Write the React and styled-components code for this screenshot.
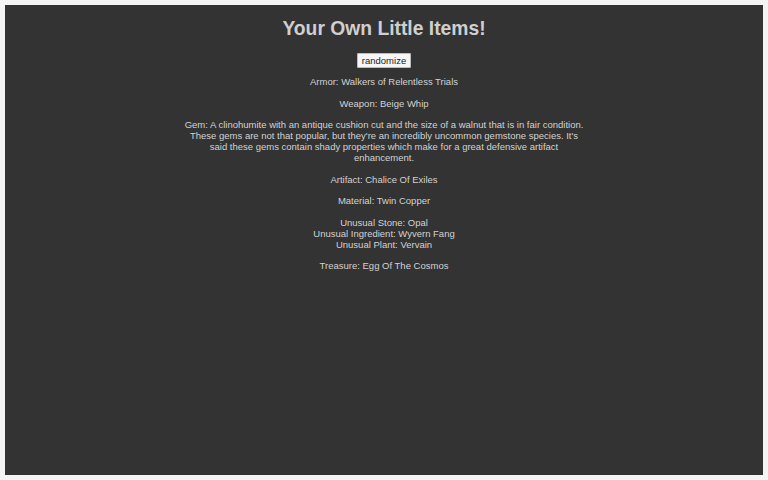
import React, { useState } from 'react';
import styled, { createGlobalStyle } from 'styled-components';

const GlobalStyle = createGlobalStyle`
    html, body {
        margin: 0;
        background: #f4f4f4;
    }
    body {
        padding: 5px;
        font-family: "Liberation Sans", Arial, sans-serif;
    }
`;

const items = {
    armor: 'Walkers of Relentless Trials',
    weapon: 'Beige Whip',
    gem: "A clinohumite with an antique cushion cut and the size of a walnut that is in fair condition. These gems are not that popular, but they're an incredibly uncommon gemstone species. It's said these gems contain shady properties which make for a great defensive artifact enhancement.",
    artifact: 'Chalice Of Exiles',
    material: 'Twin Copper',
    stone: 'Opal',
    ingredient: 'Wyvern Fang',
    plant: 'Vervain',
    treasure: 'Egg Of The Cosmos',
};

const App = () => {
    const [item] = useState(items);
    return (
        <>
            <GlobalStyle />
            <StyledPage>
                <StyledTitle>Your Own Little Items!</StyledTitle>
                <StyledButton>randomize</StyledButton>
                <StyledList>
                    <StyledLine>Armor: {item.armor}</StyledLine>
                    <StyledLine>Weapon: {item.weapon}</StyledLine>
                    <StyledLine>Gem: {item.gem}</StyledLine>
                    <StyledLine>Artifact: {item.artifact}</StyledLine>
                    <StyledLine>Material: {item.material}</StyledLine>
                    <StyledLine>
                        Unusual Stone: {item.stone}<br />
                        Unusual Ingredient: {item.ingredient}<br />
                        Unusual Plant: {item.plant}
                    </StyledLine>
                    <StyledLine>Treasure: {item.treasure}</StyledLine>
                </StyledList>
            </StyledPage>
        </>
    );
};

const StyledPage = styled.div`
    height: 470px;
    width: 758px;
    background: #333333;
    color: #d2d2d2;
    display: flex;
    flex-direction: column;
    align-items: center;
    text-align: center;
    overflow: hidden;
`;

const StyledTitle = styled.h1`
    font-size: 19.3px;
    line-height: 23px;
    font-weight: bold;
    color: #cfcfcf;
    margin: 12px 0 13px;
`;

const StyledButton = styled.button`
    font-family: "Liberation Sans", Arial, sans-serif;
    font-size: 9.5px;
    line-height: 11px;
    padding: 1px 4px;
    background: #f6f6f6;
    color: #222;
    border: 1px solid #bbb;
    border-radius: 1px;
`;

const StyledList = styled.div`
    width: 404px;
    margin-top: 8px;
`;

const StyledLine = styled.p`
    font-size: 9.5px;
    line-height: 11px;
    margin: 0 0 10.5px;
`;

export default App;
